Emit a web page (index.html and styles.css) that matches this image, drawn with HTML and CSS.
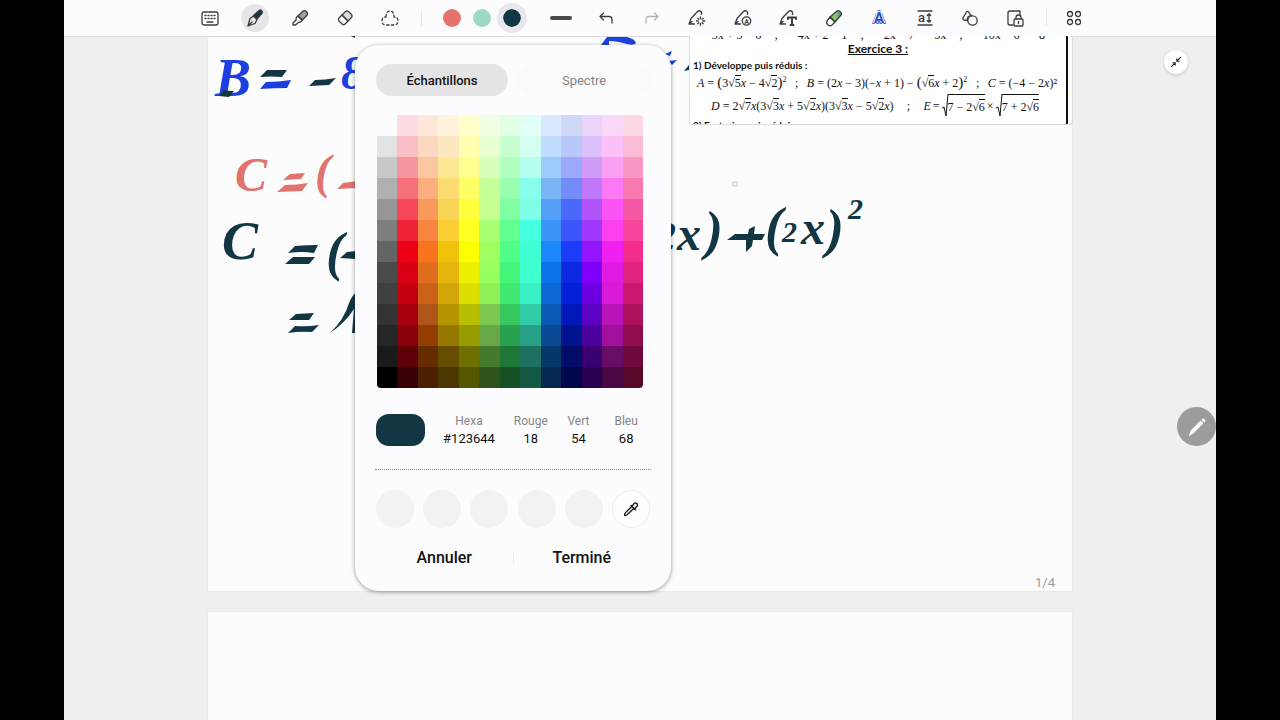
FILE: index.html
```
<!DOCTYPE html>
<html lang="fr">
<head>
    <meta charset="UTF-8">
    <meta name="viewport" content="width=device-width, initial-scale=1.0">
    <title>Notes</title>
    <link rel="stylesheet" href="styles.css">
</head>
<body>
    <div class="app">
        <header class="toolbar">
            <div class="tool-group">
                <button class="tool" aria-label="Clavier">
                    <svg viewBox="0 0 20 20"><rect x="2" y="4" width="16" height="13" rx="2"/><path d="M5 7.5h1M8 7.5h1M11 7.5h1M14 7.5h1M5 10.500h1M8 10.500h1M11 10.500h1M14 10.500h1M7 14h6"/></svg>
                </button>
                <button class="tool active" aria-label="Stylo">
                    <svg viewBox="0 0 20 20"><path class="ink-fill" d="M8.500 7.500l5.500-5q1.500-1 2.700.2t.3 2.700L12 11z"/><path d="M8.500 8l3.500 3.500-2 4-7 2.500 2-7.500z M3 18l4-4"/></svg>
                </button>
                <button class="tool" aria-label="Surligneur">
                    <svg viewBox="0 0 20 20"><path class="grey-fill" d="M8 8l5-5q1.500-1 3 .3l1 1q1.300 1.500 0 3l-5 5z"/><path d="M8 8l4.500 4.300-2 1.700-2 .4L5.500 17H3v-2l3-3 .3-2.500z"/></svg>
                </button>
                <button class="tool" aria-label="Gomme">
                    <svg viewBox="0 0 20 20"><path class="light-fill" d="M7 7l3.500-3.500q1.500-1.300 3 0l3 3q1.300 1.500 0 3L13 13z"/><path d="M7 7l6 6-3 3q-1.500 1.300-3 0l-3-3q-1.300-1.500 0-3z"/></svg>
                </button>
                <button class="tool" aria-label="Sélection">
                    <svg viewBox="0 0 20 20"><path stroke-dasharray="2.400 2.400" d="M6 9Q6 3 10 3t4 6q4 0 4 3.700Q18 17 14 17H6q-4 0-4-4.300Q2 9 6 9z"/></svg>
                </button>
            </div>
            <span class="divider"></span>
            <div class="tool-group colours">
                <button class="colour red" aria-label="Rouge"></button>
                <button class="colour mint" aria-label="Menthe"></button>
                <button class="colour dark selected" aria-label="Bleu nuit"></button>
            </div>
            <div class="tool-group wide">
                <button class="tool" aria-label="Épaisseur">
                    <svg class="thickness" viewBox="0 0 22 20"><path d="M2 10h18"/></svg>
                </button>
                <button class="tool" aria-label="Annuler l'action">
                    <svg viewBox="0 0 20 20"><path d="M7.500 5L4 8.500 7.500 12M4 8.500h9q3 0 3 3V15"/></svg>
                </button>
                <button class="tool" aria-label="Rétablir" disabled>
                    <svg viewBox="0 0 20 20"><path d="M12.500 5L16 8.500 12.500 12M16 8.500H7q-3 0-3 3V15"/></svg>
                </button>
                <button class="tool" aria-label="Mise en forme">
                    <svg viewBox="0 0 20 20"><path d="M7.500 16H2l2-5.500L10.500 3.500q1.700-1.600 3.500 0 1.200 1.500.3 3M2 16l3-2.500"/><path d="M13.500 9v1.800M13.500 15.500v1.800M9.500 13h1.700M15.800 13h2M10.800 10.300l1 1M15.200 14.700l1 1M16.200 10.300l-1 1M11.800 14.700l-1 1"/></svg>
                </button>
                <button class="tool" aria-label="Conversion automatique">
                    <svg viewBox="0 0 20 20"><path d="M7.500 16H2l2-5.500L10.500 3.500q1.700-1.600 3.500 0 1.200 1.500.5 3M2 16l3-2.500"/><circle cx="13.500" cy="13" r="4.200"/><text x="11.300" y="15.500" class="icon-small">A</text></svg>
                </button>
                <button class="tool" aria-label="Convertir en texte">
                    <svg viewBox="0 0 20 20"><path d="M7.500 16H2l2-5.500L10.500 3.500q1.700-1.600 3.500 0 1.200 1.500.5 3M2 16l3-2.500"/><path class="bold" d="M10 11v-1.500h8V11M14 9.500V17M12.500 17h3"/></svg>
                </button>
                <button class="tool" aria-label="Pinceau couleur">
                    <svg viewBox="0 0 20 20">
                        <defs><linearGradient id="rainbow"><stop offset="0" stop-color="#a8a45c"/><stop offset=".5" stop-color="#82cf65"/><stop offset="1" stop-color="#4878c8"/></linearGradient></defs>
                        <path fill="url(#rainbow)" d="M6 9l7-6q1.500-.8 3 .5t1.500 3L11 14z"/><path d="M6 9l5 5-3 3q-2 1.500-4 0t-1-4z"/>
                    </svg>
                </button>
                <button class="tool" aria-label="Style du texte">
                    <svg viewBox="0 0 20 20"><text x="5" y="15" class="icon-a">A</text></svg>
                </button>
                <button class="tool" aria-label="Alignement">
                    <svg viewBox="0 0 20 20"><path d="M3 3h14M3 17h14M14 6v8M12.300 7.500L14 5.800l1.700 1.700M12.300 12.500l1.700 1.700 1.700-1.700"/><text x="3" y="13.500" class="icon-small-a">a</text></svg>
                </button>
                <button class="tool" aria-label="Formes">
                    <svg viewBox="0 0 20 20"><path d="M7.500 12.500L4 12q-1.500-.4-1-2l3.500-6q1-1.200 2-.2L11 7.500"/><path d="M7.500 12.500q-1-4.500 4-5.200"/><circle cx="12.500" cy="12.500" r="4.700"/></svg>
                </button>
                <button class="tool" aria-label="Verrouiller la page">
                    <svg viewBox="0 0 20 20"><path d="M7 17H4q-2 0-2-2V5q0-2 2-2h10v4"/><rect x="8" y="11" width="9" height="7" rx="1"/><path d="M10 11V9.500q0-2.500 2.500-2.500T15 9.500V11M12.500 13.500v2"/></svg>
                </button>
            </div>
            <span class="divider end"></span>
            <button class="tool" aria-label="Plus">
                <svg viewBox="0 0 20 20"><circle cx="6" cy="6" r="2.500"/><circle cx="14" cy="6" r="2.500"/><circle cx="6" cy="14" r="2.500"/><circle cx="14" cy="14" r="2.500"/></svg>
            </button>
        </header>

        <main class="workspace">
            <section class="page">
                <svg class="ink" viewBox="208 37 864 554">
                    <g class="ink-blue">
                        <text x="215" y="96" class="write-xl">B</text>
                        <path d="M260 89l6-7q13 0 25-2l-4 8q-13 0-27 1z"/>
                        <text x="341" y="89" class="write-lg">8</text>
                        <path d="M601 45l6-8h20q8 2 9 6-2 3-9 1-10-3-18-3v5z"/>
                        <path d="M665 54l7-3-2 5zM669 61l8-1-5 5z"/>
                    </g>
                    <g class="ink-dark">
                        <path d="M219 96l5-6q5 1 10 1l-5 6z"/>
                        <path d="M260 77l7-7h20l-5 7q-11-1-22 0zM309 86l6-6q10 0 21-2l-7 7z"/>
                        <path d="M684 71l5-6v5zM351 36h4v2z"/>
                        <text x="222" y="259" class="write-xl">C</text>
                        <path d="M288 253l7-7q11-1 23-1l-4 8q-13-2-26 0zM285 264l8-7h22l-6 7z"/>
                        <text x="326" y="270" class="write-xl">(</text>
                        <path d="M340 258l7-6 9-1v8z"/>
                        <path d="M289 320l7-6 18-1-5 7zM288 333l7-7q12 1 24-1l-7 7q-12-1-24 1z"/>
                        <path d="M330 333q14-13 19-30 3-8 8-11v41h-5l2-24q-9 14-24 24z"/>
                        <text x="656" y="249" class="write-md">2</text>
                        <text x="677" y="250" class="write-lg">x</text>
                        <text x="705" y="249" class="write-xl">)</text>
                        <path d="M727 240l8-6h13l1-5 6-3-1 8h11l-3 6h-9l-1 6-6 6v-12z"/>
                        <text x="765" y="245" class="write-xl">(</text>
                        <text x="782" y="242" class="write-sm">2</text>
                        <text x="801" y="244" class="write-lg">x</text>
                        <text x="826" y="247" class="write-xl">)</text>
                        <text x="848" y="219" class="write-sm">2</text>
                    </g>
                    <g class="ink-red">
                        <text x="235" y="191" class="write-lg">C</text>
                        <path d="M283 180l7-6 15-1-4 6zM277 192l8-7q12 0 23-2l-6 8zM337 189l6-6 14-2v7z"/>
                        <text x="315" y="188" class="write-lg">(</text>
                    </g>
                    <rect class="nib" x="733" y="182" width="4" height="4"/>
                </svg>

                <article class="exercise">
                    <p class="math previous"><span>−3x + 3 = 6</span><span>;</span><span>−4x + 2 = 1</span><span>;</span><span>−2x − 7 = −3x</span><span>;</span><span>−10x − 6 = −8</span></p>
                    <h2>Exercice 3 :</h2>
                    <h3>1) Développe puis réduis :</h3>
                    <p class="math line-a">
                        <span><i>A</i> = <b>(</b>3√<u>5</u><i>x</i> − 4√<u>2</u><b>)</b><sup>2</sup></span>
                        <span>;</span>
                        <span><i>B</i> = (2<i>x</i> − 3)(−<i>x</i> + 1) − <b>(</b>√<u>6</u><i>x</i> + 2<b>)</b><sup>2</sup></span>
                        <span>;</span>
                        <span><i>C</i> = (−4 − 2<i>x</i>)²</span>
                    </p>
                    <p class="math line-d">
                        <span><i>D</i> = 2√<u>7</u><i>x</i>(3√<u>3</u><i>x</i> + 5√<u>2</u><i>x</i>)(3√<u>3</u><i>x</i> − 5√<u>2</u><i>x</i>)</span>
                        <span>;</span>
                        <span class="roots"><i>E</i> =
                            <svg class="root" viewBox="0 0 6 24"><path d="M0 14l2-1 2 9L6 0"/></svg><span class="radicand">7 − 2√<u>6</u></span> ×
                            <svg class="root" viewBox="0 0 6 24"><path d="M0 14l2-1 2 9L6 0"/></svg><span class="radicand">7 + 2√<u>6</u></span>
                        </span>
                    </p>
                    <h3 class="next">2) Factorise puis réduis :</h3>
                </article>

                <p class="page-number">1/4</p>
            </section>
            <section class="page"></section>

            <button class="shrink" aria-label="Réduire">
                <svg viewBox="0 0 20 20"><path d="M16 4l-5 5M11 5.500V9h3.500M4 16l5-5M5.500 11H9v3.500"/></svg>
            </button>
            <button class="pen-button" aria-label="Mode stylet">
                <svg viewBox="0 0 24 24"><path d="M3 22l2-6L16 5l3 3L8 19zM17 4l1-1q1-.5 2 .5l.5.500q1 1 .5 2l-1 1z"/></svg>
            </button>
        </main>

        <div class="picker" role="dialog" aria-label="Couleur">
            <div class="tabs">
                <button class="tab current">Échantillons</button>
                <button class="tab">Spectre</button>
            </div>

            <div class="palette"></div>

            <div class="values">
                <span class="preview"></span>
                <dl>
                    <div class="hex"><dt>Hexa</dt><dd>#123644</dd></div>
                    <div><dt>Rouge</dt><dd>18</dd></div>
                    <div><dt>Vert</dt><dd>54</dd></div>
                    <div><dt>Bleu</dt><dd>68</dd></div>
                </dl>
            </div>

            <div class="recent">
                <button class="slot" aria-label="Récent 1"></button>
                <button class="slot" aria-label="Récent 2"></button>
                <button class="slot" aria-label="Récent 3"></button>
                <button class="slot" aria-label="Récent 4"></button>
                <button class="slot" aria-label="Récent 5"></button>
                <button class="slot pipette" aria-label="Pipette">
                    <svg viewBox="0 0 20 20"><path d="M10 6l5 5M11 7l2.500-3q1.500-1.500 3 0t0 3L14 10M10.500 7.500L4 14q-1.500 2-1 3 1.500.7 3-1l7-6.500"/></svg>
                </button>
            </div>

            <div class="actions">
                <button>Annuler</button>
                <span></span>
                <button>Terminé</button>
            </div>
        </div>
    </div>

    <script>
        // one string per column, from light to dark
        const columns = [
            "fcfcfc e3e3e3 c8c8c8 b0b0b0 969696 7e7e7e 646464 4a4a4a 404040 333333 262626 1a1a1a 000000",
            "ffdce2 f9bec6 f5959d f66f7b f54757 f02336 ee0014 d80012 c2000f a5000c 88000a 600007 380005",
            "fee6d9 fbd9c1 fbc6a0 fbae80 f7995a f8853f f8741f e06d1e cc6118 b0561a 933d00 652c00 4a2000",
            "fef2dc fce8c0 fde794 fcdc70 fad455 fbd034 f0c20a e6b40a d2a508 b59400 967800 664c00 4d3700",
            "ffffcc ffffb0 ffff90 ffff66 ffff40 ffff20 fdff00 ecf000 dce000 b8bf00 969c00 6e7000 525700",
            "f0ffe4 e8ffd2 d8ffb8 c6ff98 c4ff90 a8ff70 a0ff60 98ff60 90f058 7cc850 68a848 457a2c 2f541c",
            "e0ffe4 c8ffd0 b0ffc0 98ffb0 80ffa0 60ff90 50ff88 45f57a 40e870 38c860 28a24e 1f7838 165024",
            "e0fff6 d4fff0 b4fff0 88ffec 80ffe8 44ffe0 40ffd4 40ffd0 38f0c4 30cca8 28a088 1e7060 145846",
            "dae8ff c0dcff 9cccfa 7cb4f8 54a0f8 3c94f8 1c88fc 0c74e8 0c68d4 0858b4 0a4a94 043868 042850",
            "d0d8f8 b8c8f8 9ca8fa 748cfa 4c68fa 3c54fa 1c3cfa 0c28e0 0420d8 0018b8 001490 000c68 00084c",
            "ead4fc dcc0fc d09cf8 c078fa b054fa a038fc 9414fc 8000fc 6c00e0 5c00c4 4c00a0 380070 280050",
            "fcd8f8 fcc0f8 fca0f4 fc78f4 fc54f4 fc40f0 f020f0 e01ae0 d81ad8 b814b8 a0109c 680c68 480844",
            "fcd8e4 fcbcd8 fa98c4 fa78b0 f458a4 f8449c f42c8c e02480 cc1870 ae1060 900c50 700a3c 580828"
        ];

        const palette = document.querySelector(".palette");

        columns.forEach(column => {
            column.split(" ").forEach(hex => {
                let cell = document.createElement("button");
                cell.classList.add("cell");
                cell.setAttribute("aria-label", `#${hex}`);
                cell.style.backgroundColor = `#${hex}`;
                palette.appendChild(cell);
            });
        });
    </script>
</body>
</html>
```
FILE: styles.css
```
*{
    margin: 0;
    padding: 0;
    box-sizing: border-box;
}

body{
    background-color: #000;
    font-family: Roboto, "Liberation Sans", sans-serif;
    font-size: 13px;
    color: #111;
}

button{
    border: 0;
    background: none;
    font: inherit;
    color: inherit;
    cursor: pointer;
}

svg{
    display: block;
    overflow: visible;
}

.app{
    position: relative;
    height: 100vh;
    margin: 0 5%;
    display: flex;
    flex-direction: column;
    background-color: #efefef;
    overflow: hidden;
}

/* toolbar */

.toolbar{
    display: flex;
    align-items: center;
    height: 36px;
    flex-shrink: 0;
    padding: 0 120px 0 123px;
    background-color: #fcfcfe;
    box-shadow: 0 1px 1px #dedee0;
}

.tool-group{
    display: flex;
    align-items: center;
}

.tool-group.wide{
    flex: 1;
    justify-content: space-between;
    margin-left: 11px;
}

.tool{
    width: 45px;
    height: 36px;
    display: flex;
    align-items: center;
    justify-content: center;
}

.tool svg{
    width: 20px;
    height: 20px;
    fill: none;
    stroke: #3c3c40;
    stroke-width: 1.3;
    stroke-linecap: round;
    stroke-linejoin: round;
}

.tool.active svg{
    width: 28px;
    height: 28px;
    padding: 4px;
    border-radius: 50%;
    background-color: #e6e6e8;
}

.tool:disabled svg{
    stroke: #b4b4b8;
}

.tool .thickness{
    width: 22px;
    stroke: #4a4a4e;
    stroke-width: 4;
}

.tool .ink-fill{
    fill: #123644;
}

.tool .grey-fill{
    fill: #98a2a2;
}

.tool .light-fill{
    fill: #dcdce0;
}

.tool .bold{
    stroke-width: 2;
}

.tool text{
    fill: #3c3c40;
    stroke: none;
    font-weight: 700;
}

.tool .icon-small{
    font-size: 7px;
}

.tool .icon-small-a{
    font-size: 13px;
    font-weight: 500;
}

.tool .icon-a{
    font-size: 15px;
    fill: #2850c0;
    text-shadow: 1px 0 #fff, -1px 0 #fff, 0 -1px #fff, 2px 1px #50649c, -2px 1px #50649c, 0 -2px #50649c;
}

.divider{
    width: 1px;
    height: 16px;
    margin: 0 15px 0 9px;
    background-color: #e6e6ea;
}

.divider.end{
    margin: 0 4px 0 8px;
}

.colour{
    width: 30px;
    height: 30px;
    border-radius: 50%;
    border: 6px solid transparent;
    background-clip: padding-box;
}

.red{
    background-color: #e3736b;
}

.mint{
    background-color: #9cd8c4;
}

.dark{
    background-color: #123644;
}

.selected{
    border-color: #e8e8ec;
}

/* note pages */

.workspace{
    position: relative;
    flex: 1;
    min-height: 0;
    overflow: hidden;
    padding-top: 1px;
}

.page{
    position: relative;
    width: 75%;
    min-height: 554px;
    margin: 0 auto 21px;
    background-color: #fcfcfc;
    box-shadow: 0 0 1px #ccc;
}

.ink{
    width: 100%;
    font-family: "Liberation Serif", serif;
    font-style: italic;
    font-weight: 700;
}

.ink-blue{
    fill: #1c3fe0;
}

.ink-dark{
    fill: #123644;
}

.ink-red{
    fill: #e0736d;
}

.write-sm{
    font-size: 30px;
}

.write-md{
    font-size: 40px;
}

.write-lg{
    font-size: 48px;
}

.write-xl{
    font-size: 54px;
}

.nib{
    fill: none;
    stroke: #ccc;
}

.page-number{
    position: absolute;
    right: 17px;
    bottom: 0;
    line-height: 17px;
    color: #999;
}

.exercise{
    position: absolute;
    top: -2px;
    right: -1px;
    width: 384px;
    height: 90px;
    padding: 0 15px 0 3px;
    overflow: hidden;
    background-color: #fff;
    box-shadow: inset -4px 0 #fff, inset -6px 0 #111;
    border: 1px solid #ddd;
    border-radius: 2px;
    font-family: Lato, sans-serif;
}

.exercise h2{
    padding-left: 6px;
    font-size: 12px;
    line-height: 18px;
    text-align: center;
    text-decoration: underline;
}

.exercise h3{
    font-size: 10px;
    line-height: 14px;
}

.math{
    display: flex;
    justify-content: space-between;
    font-family: "Liberation Serif", serif;
    font-size: 12px;
    line-height: 22px;
    white-space: nowrap;
}

.math b{
    font-size: 15px;
    font-weight: 400;
    line-height: 12px;
}

.math sup{
    font-size: 8px;
    line-height: 8px;
}

.math u{
    text-decoration: none;
    border-top: 1px solid #111;
}

.previous{
    height: 4px;
    padding: 0 12px;
    align-items: flex-end;
    line-height: 10px;
}

.line-a{
    padding: 0 0 0 4px;
}

.line-d{
    height: 24px;
    padding: 0 18px;
    line-height: 24px;
}

.roots{
    display: flex;
    gap: 2px;
}

.root{
    width: 6px;
    height: 24px;
    margin-right: -2px;
    fill: none;
    stroke: #111;
}

.radicand{
    border-top: 1px solid #111;
}

.shrink{
    position: absolute;
    top: 14px;
    right: 28px;
    width: 24px;
    height: 24px;
    display: flex;
    align-items: center;
    justify-content: center;
    border-radius: 50%;
    background-color: #fff;
    box-shadow: 0 1px 3px rgba(0,0,0,0.2);
}

.shrink svg{
    width: 16px;
    height: 16px;
    fill: none;
    stroke: #222;
    stroke-width: 1.4;
}

.pen-button{
    position: absolute;
    top: 371px;
    right: 0;
    width: 39px;
    height: 39px;
    display: flex;
    align-items: center;
    justify-content: center;
    border-radius: 50%;
    background-color: #9c9c9c;
}

.pen-button svg{
    width: 22px;
    height: 22px;
    fill: #fff;
}

/* colour picker */

.picker{
    position: absolute;
    top: 45px;
    left: 291px;
    width: 316px;
    padding: 19px 21px 21px;
    border-radius: 24px;
    background-color: #fcfcfe;
    box-shadow: 0 1px 4px rgba(0,0,0,0.4);
}

.tabs{
    display: flex;
    gap: 10px;
}

.tab{
    flex: 1;
    height: 32px;
    border-radius: 16px;
    background-color: #fafafb;
    color: #858585;
}

.tab.current{
    background-color: #e4e4e4;
    color: #111;
    font-weight: 500;
}

.palette{
    display: grid;
    grid-template-rows: repeat(13, 21px);
    grid-auto-flow: column;
    grid-auto-columns: 1fr;
    margin: 19px 7px 0 1px;
    border-radius: 4px;
    overflow: hidden;
}

.values{
    display: flex;
    align-items: center;
    margin-top: 24px;
    padding-bottom: 21px;
}

.preview{
    width: 49px;
    height: 32px;
    border-radius: 13px;
    background-color: #123644;
}

.values dl{
    flex: 1;
    display: grid;
    grid-template-columns: 65px repeat(3, 1fr);
    margin-left: 17px;
    text-align: center;
    line-height: 18px;
}

.values .hex{
    padding-right: 11px;
}

.values dt{
    font-size: 12px;
    color: #858585;
}

.recent{
    display: flex;
    justify-content: space-between;
    margin: 0 -1px;
    padding: 20px 1px 0;
    border-top: 1px dotted #888;
}

.slot{
    width: 38px;
    height: 38px;
    border-radius: 50%;
    background-color: #f2f2f2;
}

.pipette{
    display: flex;
    align-items: center;
    justify-content: center;
    border: 1px solid #eee;
    background-color: #fdfdfe;
}

.pipette svg{
    width: 18px;
    height: 18px;
    fill: none;
    stroke: #111;
    stroke-width: 1.5;
    stroke-linecap: round;
}

.actions{
    display: flex;
    align-items: center;
    margin-top: 18px;
}

.actions button{
    flex: 1;
    line-height: 24px;
    font-size: 16px;
    font-weight: 500;
}

.actions span{
    width: 1px;
    height: 14px;
    background-color: #eee;
}
```
